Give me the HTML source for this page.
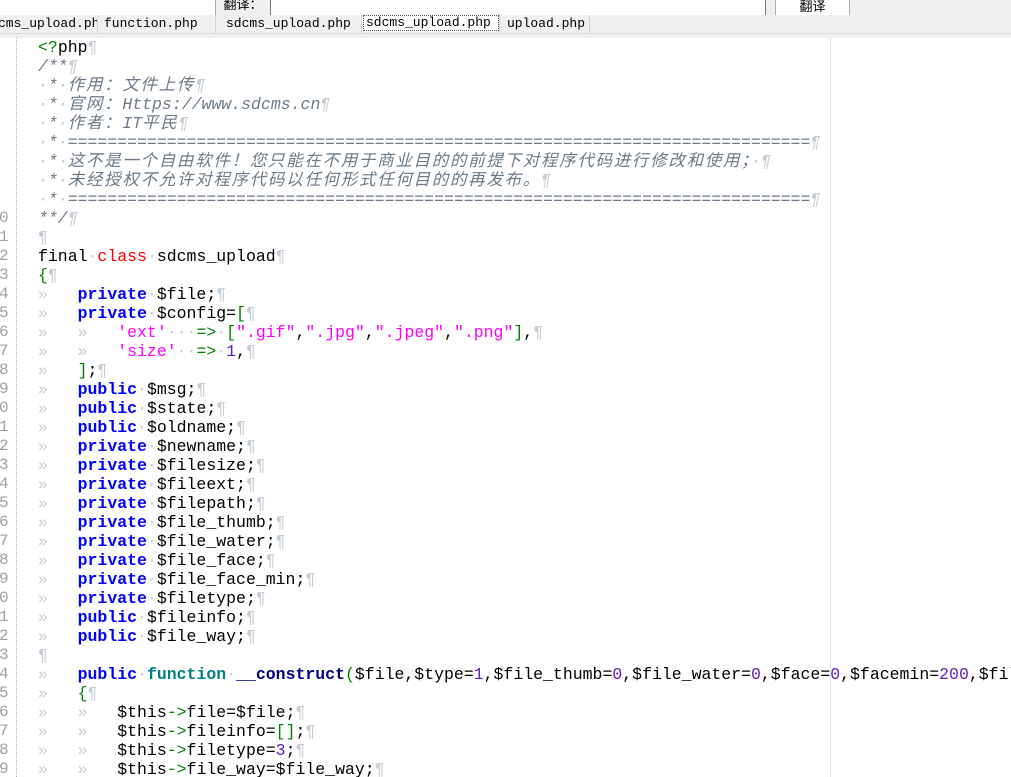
<!DOCTYPE html>
<html><head><meta charset="utf-8"><style>
body{margin:0;width:1011px;height:777px;overflow:hidden;background:#fff;position:relative;font-family:"Liberation Mono","Noto Sans CJK SC",monospace;}
.top{position:absolute;left:0;top:0;width:1011px;height:38px;background:#f0f0f0;}
.tb{position:absolute;left:270px;top:-2px;width:494px;height:18px;background:#fff;border:1px solid #7a7a7a;}
.tb0{position:absolute;left:0;top:0;width:215px;height:15px;background:#fff;}
.lbl{position:absolute;left:215px;top:-4px;width:54px;height:20px;background:#f0f0f0;border:1px solid #aaa;border-top:none;font:13px "Noto Sans CJK SC",sans-serif;text-align:center;line-height:16px;}
.btn{position:absolute;left:775px;top:-2px;width:73px;height:20px;background:#fff;border:1px solid #adadad;font:13px "Noto Sans CJK SC",sans-serif;text-align:center;line-height:14px;}
.tabs{position:absolute;left:0;top:15px;width:1011px;height:18px;border-bottom:1px solid #d8d8d8;background:#f0f0f0;}
.tab{position:absolute;top:0;height:18px;font-size:13px;line-height:18px;border-right:1px solid #d0d0d0;white-space:nowrap;color:#000;box-sizing:border-box;overflow:hidden;}
.act{background:#fff;top:-1px;outline:1px dotted #555;outline-offset:-2px;}
.ed{position:absolute;left:0;top:38px;width:1011px;height:739px;overflow:hidden;background:#fff;}
.gut{position:absolute;left:16px;top:0;height:739px;border-left:1px dotted #b0b0b0;}
.mar{position:absolute;left:830px;top:0;height:739px;border-left:1px solid #e0e0e0;}
.ln{position:absolute;left:-1px;width:10px;height:19px;font-size:16px;line-height:19px;color:#a0a0a0;}
.l{position:absolute;left:38px;height:19px;line-height:19px;font-size:16.5px;white-space:pre;color:#000;}
.w{color:#c4ccd4}
.c{color:#6c7a88;font-style:italic}
.cj{letter-spacing:1.7px}
.k{color:#0000ff;font-weight:bold}
.f{color:#008080;font-weight:bold}
.cl{color:#ff0000}
.s{color:#ff00ff}
.o{color:#008000}
.n{color:#6020c0}
.fn{color:#000080;font-weight:bold}
</style></head><body>
<div class="top">
<div class="tb0"></div>
<div class="lbl">翻译：</div>
<div class="tb"></div>
<div class="btn">翻译</div>
<div class="tabs">
<div class="tab" style="left:-2px;width:100px;">cms_upload.php</div>
<div class="tab" style="left:98px;width:118px;padding-left:6px">function.php</div>
<div class="tab" style="left:216px;width:146px;padding-left:10px">sdcms_upload.php</div>
<div class="tab act" style="left:362px;width:138px;padding-left:4px">sdcms_upload.php</div>
<div class="tab" style="left:502px;width:88px;padding-left:5px">upload.php</div>
</div>
</div>
<div class="ed">
<div class="gut"></div><div class="mar"></div>
<div class="ln" style="top:171px">0</div>
<div class="ln" style="top:190px">1</div>
<div class="ln" style="top:209px">2</div>
<div class="ln" style="top:228px">3</div>
<div class="ln" style="top:247px">4</div>
<div class="ln" style="top:266px">5</div>
<div class="ln" style="top:285px">6</div>
<div class="ln" style="top:304px">7</div>
<div class="ln" style="top:323px">8</div>
<div class="ln" style="top:342px">9</div>
<div class="ln" style="top:361px">0</div>
<div class="ln" style="top:380px">1</div>
<div class="ln" style="top:399px">2</div>
<div class="ln" style="top:418px">3</div>
<div class="ln" style="top:437px">4</div>
<div class="ln" style="top:456px">5</div>
<div class="ln" style="top:475px">6</div>
<div class="ln" style="top:494px">7</div>
<div class="ln" style="top:513px">8</div>
<div class="ln" style="top:532px">9</div>
<div class="ln" style="top:551px">0</div>
<div class="ln" style="top:570px">1</div>
<div class="ln" style="top:589px">2</div>
<div class="ln" style="top:608px">3</div>
<div class="ln" style="top:627px">4</div>
<div class="ln" style="top:646px">5</div>
<div class="ln" style="top:665px">6</div>
<div class="ln" style="top:684px">7</div>
<div class="ln" style="top:703px">8</div>
<div class="ln" style="top:722px">9</div>

<div class="l" style="top:0px"><span class="o">&lt;?</span>php<span class="w">¶</span></div>
<div class="l c" style="top:19px">/**<span class="w">¶</span></div>
<div class="l c" style="top:38px"><span class="w">·</span>*<span class="w">·</span><span class="cj">作用：文件上传</span><span class="w">¶</span></div>
<div class="l c" style="top:57px"><span class="w">·</span>*<span class="w">·</span><span class="cj">官网：</span>Https://www.sdcms.cn<span class="w">¶</span></div>
<div class="l c" style="top:76px"><span class="w">·</span>*<span class="w">·</span><span class="cj">作者：</span>IT<span class="cj">平民</span><span class="w">¶</span></div>
<div class="l c" style="top:95px"><span class="w">·</span>*<span class="w">·</span>===========================================================================<span class="w">¶</span></div>
<div class="l c" style="top:114px"><span class="w">·</span>*<span class="w">·</span><span class="cj">这不是一个自由软件！您只能在不用于商业目的的前提下对程序代码进行修改和使用；</span><span class="w">·¶</span></div>
<div class="l c" style="top:133px"><span class="w">·</span>*<span class="w">·</span><span class="cj">未经授权不允许对程序代码以任何形式任何目的的再发布。</span><span class="w">¶</span></div>
<div class="l c" style="top:152px"><span class="w">·</span>*<span class="w">·</span>===========================================================================<span class="w">¶</span></div>
<div class="l c" style="top:171px">**/<span class="w">¶</span></div>
<div class="l" style="top:190px"><span class="w">¶</span></div>
<div class="l" style="top:209px">final<span class="w">·</span><span class="cl">class</span><span class="w">·</span>sdcms_upload<span class="w">¶</span></div>
<div class="l" style="top:228px"><span class="o">{</span><span class="w">¶</span></div>
<div class="l" style="top:247px"><span class="w">»   </span><span class="k">private</span><span class="w">·</span>$file;<span class="w">¶</span></div>
<div class="l" style="top:266px"><span class="w">»   </span><span class="k">private</span><span class="w">·</span>$config=<span class="o">[</span><span class="w">¶</span></div>
<div class="l" style="top:285px"><span class="w">»   »   </span><span class="s">'ext'</span><span class="w">···</span><span class="o">=&gt;</span><span class="w">·</span><span class="o">[</span><span class="s">".gif"</span>,<span class="s">".jpg"</span>,<span class="s">".jpeg"</span>,<span class="s">".png"</span><span class="o">]</span>,<span class="w">¶</span></div>
<div class="l" style="top:304px"><span class="w">»   »   </span><span class="s">'size'</span><span class="w">··</span><span class="o">=&gt;</span><span class="w">·</span><span class="n">1</span>,<span class="w">¶</span></div>
<div class="l" style="top:323px"><span class="w">»   </span><span class="o">]</span>;<span class="w">¶</span></div>
<div class="l" style="top:342px"><span class="w">»   </span><span class="k">public</span><span class="w">·</span>$msg;<span class="w">¶</span></div>
<div class="l" style="top:361px"><span class="w">»   </span><span class="k">public</span><span class="w">·</span>$state;<span class="w">¶</span></div>
<div class="l" style="top:380px"><span class="w">»   </span><span class="k">public</span><span class="w">·</span>$oldname;<span class="w">¶</span></div>
<div class="l" style="top:399px"><span class="w">»   </span><span class="k">private</span><span class="w">·</span>$newname;<span class="w">¶</span></div>
<div class="l" style="top:418px"><span class="w">»   </span><span class="k">private</span><span class="w">·</span>$filesize;<span class="w">¶</span></div>
<div class="l" style="top:437px"><span class="w">»   </span><span class="k">private</span><span class="w">·</span>$fileext;<span class="w">¶</span></div>
<div class="l" style="top:456px"><span class="w">»   </span><span class="k">private</span><span class="w">·</span>$filepath;<span class="w">¶</span></div>
<div class="l" style="top:475px"><span class="w">»   </span><span class="k">private</span><span class="w">·</span>$file_thumb;<span class="w">¶</span></div>
<div class="l" style="top:494px"><span class="w">»   </span><span class="k">private</span><span class="w">·</span>$file_water;<span class="w">¶</span></div>
<div class="l" style="top:513px"><span class="w">»   </span><span class="k">private</span><span class="w">·</span>$file_face;<span class="w">¶</span></div>
<div class="l" style="top:532px"><span class="w">»   </span><span class="k">private</span><span class="w">·</span>$file_face_min;<span class="w">¶</span></div>
<div class="l" style="top:551px"><span class="w">»   </span><span class="k">private</span><span class="w">·</span>$filetype;<span class="w">¶</span></div>
<div class="l" style="top:570px"><span class="w">»   </span><span class="k">public</span><span class="w">·</span>$fileinfo;<span class="w">¶</span></div>
<div class="l" style="top:589px"><span class="w">»   </span><span class="k">public</span><span class="w">·</span>$file_way;<span class="w">¶</span></div>
<div class="l" style="top:608px"><span class="w">¶</span></div>
<div class="l" style="top:627px"><span class="w">»   </span><span class="k">public</span><span class="w">·</span><span class="f">function</span><span class="w">·</span><span class="fn">__construct</span><span class="o">(</span>$file,$type=<span class="n">1</span>,$file_thumb=<span class="n">0</span>,$file_water=<span class="n">0</span>,$face=<span class="n">0</span>,$facemin=<span class="n">200</span>,$file_way</div>
<div class="l" style="top:646px"><span class="w">»   </span><span class="o">{</span><span class="w">¶</span></div>
<div class="l" style="top:665px"><span class="w">»   »   </span>$this<span class="o">-&gt;</span>file=$file;<span class="w">¶</span></div>
<div class="l" style="top:684px"><span class="w">»   »   </span>$this<span class="o">-&gt;</span>fileinfo=<span class="o">[]</span>;<span class="w">¶</span></div>
<div class="l" style="top:703px"><span class="w">»   »   </span>$this<span class="o">-&gt;</span>filetype=<span class="n">3</span>;<span class="w">¶</span></div>
<div class="l" style="top:722px"><span class="w">»   »   </span>$this<span class="o">-&gt;</span>file_way=$file_way;<span class="w">¶</span></div>
</div>
</body></html>
